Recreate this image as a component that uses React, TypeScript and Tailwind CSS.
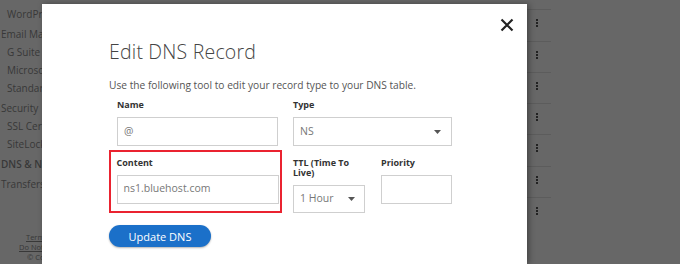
const sideItems = [
  { label: 'WordPress', sub: true },
  { label: 'Email Management', sub: false },
  { label: 'G Suite', sub: true },
  { label: 'Microsoft 365', sub: true },
  { label: 'Standard Email', sub: true },
  { label: 'Security', sub: false },
  { label: 'SSL Certificates', sub: true },
  { label: 'SiteLock', sub: true },
  { label: 'DNS & Nameservers', sub: false, bold: true },
  { label: 'Transfers', sub: false },
]

function Caret() {
  return (
    <svg width="7" height="4" viewBox="0 0 7 4" className="fill-[#555]">
      <path d="M0 0h7L3.5 4z" />
    </svg>
  )
}

function Sidebar() {
  return (
    <div className="w-[42px] shrink-0 overflow-hidden text-[#383838] text-[10px] leading-[18px] pt-[5px] whitespace-nowrap">
      {sideItems.map((it, i) => (
        <div
          key={it.label}
          className={`${it.sub ? 'pl-[7px]' : 'pl-[1px]'} ${!it.sub && i > 0 ? 'mt-[2px]' : ''} ${it.bold ? 'font-semibold' : ''}`}
        >
          {it.label}
        </div>
      ))}
      <div className="mt-[39px] text-[7.5px] leading-[10px] flex flex-col">
        <span className="pl-[26px] underline">Terms</span>
        <span className="pl-[19px] underline">Do Not Sell</span>
        <span className="pl-[27px]">© Copyright</span>
      </div>
    </div>
  )
}

function TableEdge() {
  const rows = [0, 1, 2, 3, 4, 5, 6]
  return (
    <div className="flex-1">
      <div className="w-[24px] flex flex-col -mt-[21px]">
        {rows.map((r) => (
          <div key={r} className="h-[31.3px] border-b border-[#5c5c5c] flex items-end">
            <div className="ml-[9px] flex flex-col gap-[1px] translate-y-[18px]">
              <span className="w-[2px] h-[2px] bg-[#222]" />
              <span className="w-[2px] h-[2px] bg-[#222]" />
              <span className="w-[2px] h-[2px] bg-[#222]" />
            </div>
          </div>
        ))}
      </div>
    </div>
  )
}

const labelCls = 'text-[9px] font-bold leading-[12px] text-[#333]'
const inputCls = 'h-[29px] border border-[#cfcfcf] flex items-center px-[6px] text-[10.5px] text-[#777]'

export default function App() {
  return (
    <div className="w-[680px] h-[264px] overflow-hidden bg-[#676767] flex" style={{ fontFamily: '"Open Sans", "Noto Sans", sans-serif' }}>
      <Sidebar />
      <div className="w-[485px] shrink-0 mt-[4px] bg-white shadow-[2px_0_6px_rgba(0,0,0,0.35)] relative pl-[67px] pt-[35px]">
        <button className="absolute right-[13px] top-[14px] text-[#222]">
          <svg width="14" height="14" viewBox="0 0 14 14" stroke="currentColor" strokeWidth="2.2">
            <path d="M1.5 1.5l11 11M12.5 1.5l-11 11" />
          </svg>
        </button>
        <h1 className="text-[19.5px] font-light text-[#444] leading-[26px] tracking-[0.2px]">Edit DNS Record</h1>
        <p className="mt-[13px] text-[10.2px] text-[#555] leading-[14px]">
          Use the following tool to edit your record type to your DNS table.
        </p>
        <div className="mt-[7px] ml-[8px] grid grid-cols-[161px_73px_73px] gap-x-[14px] gap-y-[4px]">
          <div>
            <div className={labelCls}>Name</div>
            <div className={`mt-[6px] ${inputCls}`}>@</div>
          </div>
          <div className="col-span-2 ml-[1px]">
            <div className={labelCls}>Type</div>
            <div className={`mt-[6px] justify-between pr-[10px] ${inputCls}`}>
              <span>NS</span>
              <Caret />
            </div>
          </div>
          <div className="-ml-[8px] -mr-[4px] border-[2.5px] border-[#ea2330] pl-[5.5px] pr-[1.5px] pt-[4.5px] pb-[7.5px]">
            <div className={labelCls}>Content</div>
            <div className={`mt-[6px] ${inputCls}`}>ns1.bluehost.com</div>
          </div>
          <div className="mt-[8px] ml-[1px]">
            <div className="text-[9px] font-bold leading-[10px] text-[#333] pr-[4px]">TTL (Time To Live)</div>
            <div className={`mt-[7px] !h-[28px] justify-between pr-[9px] ${inputCls}`}>
              <span>1 Hour</span>
              <Caret />
            </div>
          </div>
          <div className="mt-[7px] ml-[2px]">
            <div className={labelCls}>Priority</div>
            <div className="mt-[6px] h-[29px] border border-[#cfcfcf]" />
          </div>
        </div>
        <button className="mt-[12px] w-[102px] h-[22px] rounded-full bg-[#1b70c9] text-white text-[11px] leading-none shadow-[0_1px_2px_rgba(0,0,0,0.3)]">
          Update DNS
        </button>
      </div>
      <TableEdge />
    </div>
  )
}
